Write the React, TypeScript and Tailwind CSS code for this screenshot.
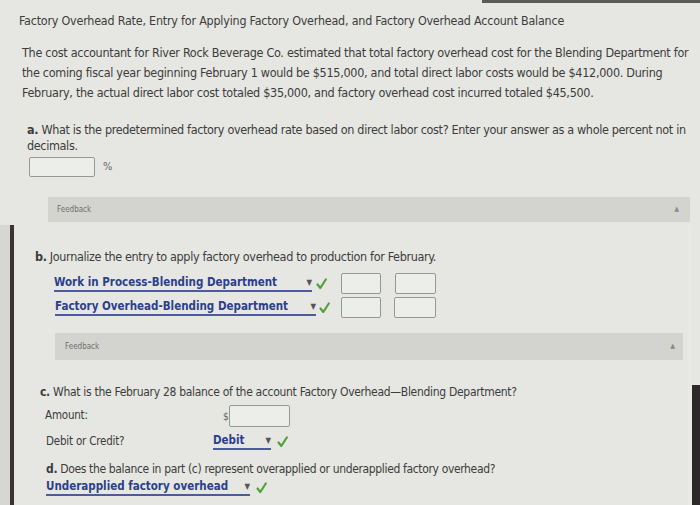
import { ReactNode } from 'react';

const font = { fontFamily: '"DejaVu Sans Condensed", "DejaVu Sans", Verdana, sans-serif' };

function Check() {
  return (
    <svg width="11" height="12" viewBox="0 0 11 12" className="block">
      <path d="M1.5 6.5 L4.3 10 L9.8 1.5" fill="none" stroke="#52a03a" strokeWidth="2.2" strokeLinecap="round" strokeLinejoin="round" />
    </svg>
  );
}

function Select({ label, width }: { label: string; width: string }) {
  return (
    <div className={`flex items-end justify-between border-b-2 border-[#4b5c98] ${width}`}>
      <span className="text-[11.5px] font-bold text-[#2c3f8a] leading-[15px] whitespace-nowrap">{label}</span>
      <span className="mb-[3px] text-[8px] text-[#555] leading-none">▼</span>
    </div>
  );
}

function Box({ className }: { className: string }) {
  return <div className={`shrink-0 rounded-[2px] border-[1.5px] border-[#979894] bg-[#eceeea] ${className}`} />;
}

function Feedback({ className }: { className: string }) {
  return (
    <div className={`flex items-center justify-between bg-[#d3d4d0] ${className}`}>
      <span className="text-[8px] text-[#6e6f6c]">Feedback</span>
      <span className="text-[7px] text-[#8a8b88]">▲</span>
    </div>
  );
}

function Row({ children, className }: { children: ReactNode; className: string }) {
  return <div className={`flex items-center ${className}`}>{children}</div>;
}

export default function App() {
  return (
    <div style={font} className="w-[700px] h-[505px] overflow-hidden bg-[#e6e7e3] text-[#3c3c3b]">
      {/* top strip of the screen bezel */}
      <div className="flex h-[3px]">
        <div className="w-[482px]" />
        <div className="flex-1 bg-[#5b5a58]" />
      </div>

      <h1 className="ml-[19px] mt-[10px] text-[12.4px] leading-[16px] tracking-[-0.2px] whitespace-nowrap">
        Factory Overhead Rate, Entry for Applying Factory Overhead, and Factory Overhead Account Balance
      </h1>

      <p className="ml-[22px] mt-[14px] text-[12.5px] leading-[20px] tracking-[-0.3px] whitespace-nowrap">
        The cost accountant for River Rock Beverage Co. estimated that total factory overhead cost for the Blending Department for
        <br />
        the coming fiscal year beginning February 1 would be $515,000, and total direct labor costs would be $412,000. During
        <br />
        February, the actual direct labor cost totaled $35,000, and factory overhead cost incurred totaled $45,500.
      </p>

      <p className="ml-[27px] mt-[19px] text-[12.5px] leading-[16px] tracking-[-0.35px] whitespace-nowrap">
        <span className="font-bold">a.</span> What is the predetermined factory overhead rate based on direct labor cost? Enter your answer as a whole percent not in
        <br />
        decimals.
      </p>

      <Row className="ml-[29px] mt-[3px] gap-[8px]">
        <Box className="w-[66px] h-[20px]" />
        <span className="text-[11px] text-[#666]">%</span>
      </Row>

      <Feedback className="ml-[48px] mt-[20px] w-[642px] h-[25px] pl-[9px] pr-[11px]" />

      {/* lower part, where the screen bezel shows on the left */}
      <div className="flex h-[282px] mt-[3px]">
        <div className="w-[10px] bg-[#d6d6d2]" />
        <div className="w-[4px] bg-[#3b3433]" />
        <div className="flex-1">
          <p className="ml-[21px] mt-[24px] text-[12.5px] leading-[16px] tracking-[-0.35px] whitespace-nowrap">
            <span className="font-bold">b.</span> Journalize the entry to apply factory overhead to production for February.
          </p>

          <Row className="ml-[40px] mt-[8px]">
            <Select label="Work in Process-Blending Department" width="w-[258px]" />
            <span className="ml-[4px]"><Check /></span>
            <Box className="ml-[14px] w-[40px] h-[21px]" />
            <Box className="ml-[14px] w-[41px] h-[21px]" />
          </Row>
          <Row className="ml-[41px] mt-[3px]">
            <Select label="Factory Overhead-Blending Department" width="w-[261px]" />
            <span className="ml-[3px]"><Check /></span>
            <Box className="ml-[11px] w-[40px] h-[21px]" />
            <Box className="ml-[13px] w-[42px] h-[21px]" />
          </Row>

          <Feedback className="ml-[41px] mt-[15px] w-[628px] h-[27px] pl-[10px] pr-[8px]" />

          <p className="ml-[26px] mt-[24px] text-[12px] leading-[16px] tracking-[-0.3px] whitespace-nowrap">
            <span className="font-bold">c.</span> What is the February 28 balance of the account Factory Overhead—Blending Department?
          </p>

          <Row className="ml-[31px] mt-[5px]">
            <span className="w-[178px] text-[11.5px] tracking-[-0.2px]">Amount:</span>
            <span className="text-[10px] text-[#666]">$</span>
            <Box className="w-[61px] h-[22px]" />
          </Row>

          <Row className="ml-[32px] mt-[6px]">
            <span className="w-[167px] text-[11.5px] tracking-[-0.2px]">Debit or Credit?</span>
            <Select label="Debit" width="w-[58px]" />
            <span className="ml-[6px]"><Check /></span>
          </Row>

          <p className="ml-[32px] mt-[11px] text-[12px] leading-[16px] tracking-[-0.35px] whitespace-nowrap">
            <span className="font-bold">d.</span> Does the balance in part (c) represent overapplied or underapplied factory overhead?
          </p>
          <Row className="ml-[32px] mt-[2px]">
            <Select label="Underapplied factory overhead" width="w-[204px]" />
            <span className="ml-[6px]"><Check /></span>
          </Row>
        </div>
        <div className="w-[4px] bg-[#e9eae6]" />
        <div className="w-[8px] flex flex-col">
          <div className="h-[160px]" />
          <div className="flex-1 bg-[#2e2a2c]" />
        </div>
      </div>
    </div>
  );
}
